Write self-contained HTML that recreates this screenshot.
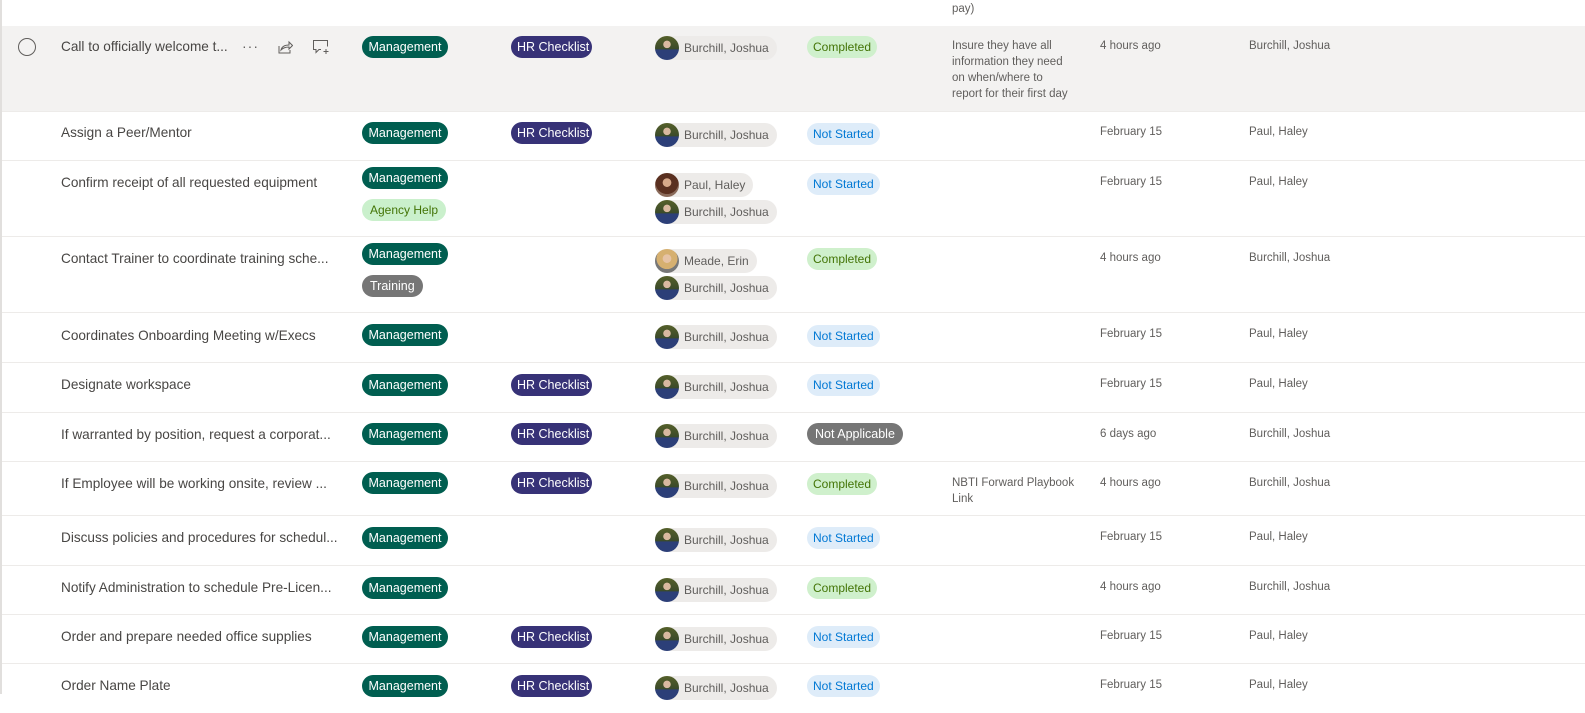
<!DOCTYPE html><html><head><style>
body{margin:0;width:1585px;height:694px;overflow:hidden;background:#fff;font-family:"Liberation Sans",sans-serif;position:relative}
.lb{position:absolute;left:0;top:0;width:2px;height:694px;background:#e1dfdd}
.r{position:absolute;left:2px;right:0;border-bottom:1px solid #edebe9}
.r>*{position:absolute}
.t{left:59px;font-size:13.6px;color:#484644;line-height:16px;white-space:nowrap}
.m{font-size:11.5px;color:#605e5c;line-height:16px}
.p{height:22px;line-height:22px;border-radius:11px;font-size:12px;padding:0 6px;white-space:nowrap;box-sizing:border-box;text-align:center}
.mg{left:360px;background:#005e50;color:#fff;width:86px;font-size:12.5px}
.hr{left:509px;background:#373277;color:#fff;width:81px;font-size:12.5px}
.ns{left:805px;background:#deecf9;color:#0078d4}
.cp{left:805px;background:#cff0cc;color:#437406}
.na{left:805px;background:#767676;color:#fff;font-size:12.5px;padding:0 8px}
.ps{left:653px;height:24px;line-height:24px;border-radius:12px;background:#edebe9;font-size:12px;color:#605e5c;padding:0 8px 0 29px;white-space:nowrap}
.ps i{position:absolute;left:0;top:0;width:24px;height:24px;border-radius:50%;background:radial-gradient(circle at 50% 35%,#d9b9a0 0 18%,transparent 20%),linear-gradient(#55602a,#3a4a2a 55%,#2c3f78 56%)}
.ps i.h{background:radial-gradient(circle at 50% 40%,#d7a98a 0 22%,#5a3020 24% 60%,#8a6a5a 62%)}
.ps i.e{background:radial-gradient(circle at 50% 40%,#e6c3a5 0 22%,#d6b070 24% 55%,#777 57%)}
.d{left:1098px}.mo{left:1247px}.no{left:950px}
</style></head><body>
<div class="lb"></div>
<div class="m" style="position:absolute;left:952px;top:1px">pay)</div>

<div class="r" style="top:26px;height:85px;background:#f3f2f1">
<div style="left:16px;top:12px;width:16px;height:16px;border:1px solid #605e5c;border-radius:50%"></div>
<div class="t" style="top:13px">Call to officially welcome t...</div>
<div style="left:240px;top:12px;font-size:14px;color:#605e5c;letter-spacing:1px">···</div>
<svg style="left:275px;top:13px" width="16" height="16" viewBox="0 0 16 16" fill="none" stroke="#605e5c" stroke-width="1"><path d="M2 7v7h11v-3"/><path d="M4 11c1-4 4-5 8-5V3l3.5 3.5L12 10V8c-3 0-6 1-8 3z"/></svg>
<svg style="left:310px;top:13px" width="18" height="16" viewBox="0 0 18 16" fill="none" stroke="#605e5c" stroke-width="1"><path d="M13 1.5H1.5v9H4v3l3-3h2"/><path d="M13 1.5h2.5v6"/><path d="M14 10v5M11.5 12.5h5"/></svg>
<div class="p mg" style="top:10px">Management</div>
<div class="p hr" style="top:10px">HR Checklist</div>
<div class="ps" style="top:10px"><i></i>Burchill, Joshua</div>
<div class="p cp" style="top:10px">Completed</div>
<div class="m no" style="top:12px;width:122px">Insure they have all information they need on when/where to report for their first day</div>
<div class="m d" style="top:12px">4 hours ago</div>
<div class="m mo" style="top:12px">Burchill, Joshua</div>
</div>

<div class="r" style="top:111px;height:49px">
<div class="t" style="top:14px">Assign a Peer/Mentor</div>
<div class="p mg" style="top:11px">Management</div><div class="p hr" style="top:11px">HR Checklist</div>
<div class="ps" style="top:12px"><i></i>Burchill, Joshua</div><div class="p ns" style="top:12px">Not Started</div>
<div class="m d" style="top:13px">February 15</div><div class="m mo" style="top:13px">Paul, Haley</div></div>

<div class="r" style="top:161px;height:75px">
<div class="t" style="top:14px">Confirm receipt of all requested equipment</div>
<div class="p mg" style="top:6px">Management</div>
<div class="p" style="left:360px;top:38px;background:#caf0cc;color:#437406;padding:0 8px">Agency Help</div>
<div class="ps" style="top:12px"><i class="h"></i>Paul, Haley</div>
<div class="ps" style="top:39px"><i></i>Burchill, Joshua</div>
<div class="p ns" style="top:12px">Not Started</div>
<div class="m d" style="top:13px">February 15</div><div class="m mo" style="top:13px">Paul, Haley</div></div>

<div class="r" style="top:237px;height:75px">
<div class="t" style="top:14px">Contact Trainer to coordinate training sche...</div>
<div class="p mg" style="top:6px">Management</div>
<div class="p" style="left:360px;top:38px;background:#767676;color:#fff;font-size:12.5px;padding:0 8px">Training</div>
<div class="ps" style="top:12px"><i class="e"></i>Meade, Erin</div>
<div class="ps" style="top:39px"><i></i>Burchill, Joshua</div>
<div class="p cp" style="top:11px">Completed</div>
<div class="m d" style="top:13px">4 hours ago</div><div class="m mo" style="top:13px">Burchill, Joshua</div></div>

<div class="r" style="top:313px;height:49px">
<div class="t" style="top:15px">Coordinates Onboarding Meeting w/Execs</div>
<div class="p mg" style="top:11px">Management</div>
<div class="ps" style="top:12px"><i></i>Burchill, Joshua</div><div class="p ns" style="top:12px">Not Started</div>
<div class="m d" style="top:13px">February 15</div><div class="m mo" style="top:13px">Paul, Haley</div></div>

<div class="r" style="top:363px;height:49px">
<div class="t" style="top:14px">Designate workspace</div>
<div class="p mg" style="top:11px">Management</div><div class="p hr" style="top:11px">HR Checklist</div>
<div class="ps" style="top:12px"><i></i>Burchill, Joshua</div><div class="p ns" style="top:11px">Not Started</div>
<div class="m d" style="top:13px">February 15</div><div class="m mo" style="top:13px">Paul, Haley</div></div>

<div class="r" style="top:413px;height:48px">
<div class="t" style="top:14px">If warranted by position, request a corporat...</div>
<div class="p mg" style="top:10px">Management</div><div class="p hr" style="top:10px">HR Checklist</div>
<div class="ps" style="top:11px"><i></i>Burchill, Joshua</div><div class="p na" style="top:10px">Not Applicable</div>
<div class="m d" style="top:13px">6 days ago</div><div class="m mo" style="top:13px">Burchill, Joshua</div></div>

<div class="r" style="top:462px;height:53px">
<div class="t" style="top:14px">If Employee will be working onsite, review ...</div>
<div class="p mg" style="top:10px">Management</div><div class="p hr" style="top:10px">HR Checklist</div>
<div class="ps" style="top:12px"><i></i>Burchill, Joshua</div><div class="p cp" style="top:11px">Completed</div>
<div class="m no" style="top:13px;width:125px">NBTI Forward Playbook Link</div>
<div class="m d" style="top:13px">4 hours ago</div><div class="m mo" style="top:13px">Burchill, Joshua</div></div>

<div class="r" style="top:516px;height:49px">
<div class="t" style="top:14px">Discuss policies and procedures for schedul...</div>
<div class="p mg" style="top:11px">Management</div>
<div class="ps" style="top:12px"><i></i>Burchill, Joshua</div><div class="p ns" style="top:11px">Not Started</div>
<div class="m d" style="top:13px">February 15</div><div class="m mo" style="top:13px">Paul, Haley</div></div>

<div class="r" style="top:566px;height:48px">
<div class="t" style="top:14px">Notify Administration to schedule Pre-Licen...</div>
<div class="p mg" style="top:11px">Management</div>
<div class="ps" style="top:12px"><i></i>Burchill, Joshua</div><div class="p cp" style="top:11px">Completed</div>
<div class="m d" style="top:13px">4 hours ago</div><div class="m mo" style="top:13px">Burchill, Joshua</div></div>

<div class="r" style="top:615px;height:48px">
<div class="t" style="top:14px">Order and prepare needed office supplies</div>
<div class="p mg" style="top:11px">Management</div><div class="p hr" style="top:11px">HR Checklist</div>
<div class="ps" style="top:12px"><i></i>Burchill, Joshua</div><div class="p ns" style="top:11px">Not Started</div>
<div class="m d" style="top:13px">February 15</div><div class="m mo" style="top:13px">Paul, Haley</div></div>

<div class="r" style="top:664px;height:49px;border:0">
<div class="t" style="top:14px">Order Name Plate</div>
<div class="p mg" style="top:11px">Management</div><div class="p hr" style="top:11px">HR Checklist</div>
<div class="ps" style="top:12px"><i></i>Burchill, Joshua</div><div class="p ns" style="top:11px">Not Started</div>
<div class="m d" style="top:13px">February 15</div><div class="m mo" style="top:13px">Paul, Haley</div></div>
</body></html>
